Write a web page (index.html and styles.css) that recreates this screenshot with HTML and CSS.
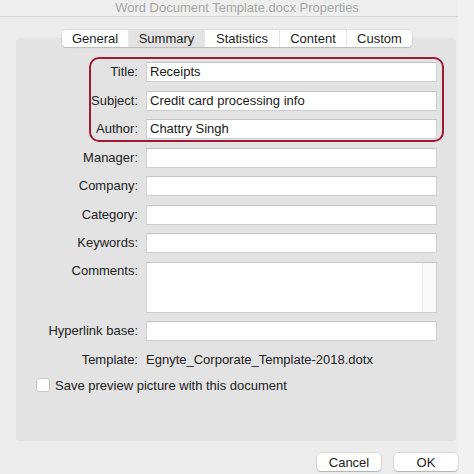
FILE: index.html
```html
<!DOCTYPE html>
<html lang="en">
<head>
    <meta charset="UTF-8">
    <meta name="viewport" content="width=device-width, initial-scale=1.0">
    <title>Word Document Template.docx Properties</title>
    <link rel="stylesheet" href="styles.css">
</head>
<body>
    <div class="window">
        <div class="titlebar">Word Document Template.docx Properties</div>

        <div class="tabs">
            <div class="tab">General</div>
            <div class="tab selected">Summary</div>
            <div class="tab">Statistics</div>
            <div class="tab">Content</div>
            <div class="tab">Custom</div>
        </div>

        <div class="panel">
            <div class="group">
                <div class="mark"></div>
                <div class="form">
                    <label>Title:</label>
                    <div class="field">Receipts</div>
                    <label>Subject:</label>
                    <div class="field">Credit card processing info</div>
                    <label>Author:</label>
                    <div class="field">Chattry Singh</div>
                </div>
            </div>

            <div class="form">
                <label>Manager:</label>
                <div class="field"></div>
                <label>Company:</label>
                <div class="field"></div>
                <label>Category:</label>
                <div class="field"></div>
                <label>Keywords:</label>
                <div class="field"></div>
                <label class="top">Comments:</label>
                <div class="field comments"><div class="scroll"></div></div>
                <label>Hyperlink base:</label>
                <div class="field"></div>
                <label>Template:</label>
                <div class="value">Egnyte_Corporate_Template-2018.dotx</div>
            </div>

            <div class="check">
                <span class="box"></span>
                <span>Save preview picture with this document</span>
            </div>
        </div>

        <div class="actions">
            <button>Cancel</button>
            <button>OK</button>
        </div>
    </div>
</body>
</html>
```

FILE: styles.css
```css
body {
    margin: 0;
    background-color: #f1f1f1;
    font-family: "Liberation Sans", Arial, sans-serif;
    font-size: 13px;
    color: #222;
}
.window {
    width: 458px;
    height: 474px;
    background-color: #ececec;
}
.titlebar {
    height: 17px;
    line-height: 15px;
    text-align: center;
    color: #a6a6a6;
    background-color: #eeeeee;
    border-bottom: 1px solid #d9d9d9;
    box-sizing: border-box;
    padding-left: 16px;
}
.tabs {
    display: flex;
    width: 350px;
    height: 17px;
    margin: 13px 0 -9px 62px;
    background-color: #fff;
    border-radius: 4px;
    box-shadow: 0 0 0 0.5px rgba(0,0,0,0.12), 0 1px 1px rgba(0,0,0,0.12);
    position: relative;
    overflow: hidden;
}
.tab {
    line-height: 17px;
    text-align: center;
    border-left: 1px solid #e6e6e6;
    color: #1e1e1e;
}
.tab:first-child { border-left: none; width: 66px; }
.tab:nth-child(2) { width: 75px; }
.tab:nth-child(3) { width: 74px; }
.tab:nth-child(4) { width: 66px; }
.tab:nth-child(5) { flex: 1; }
.tab.selected {
    background-color: #e3e3e3;
}
.panel {
    margin-left: 16px;
    width: 440px;
    height: 403px;
    box-sizing: border-box;
    padding-top: 24px;
    background-color: #e3e3e3;
    border-radius: 4px;
}
.group {
    position: relative;
    margin-bottom: 8.5px;
}
.mark {
    position: absolute;
    left: 73px;
    top: -5px;
    width: 355px;
    height: 85px;
    box-sizing: border-box;
    border: 2px solid #9c1c38;
    border-radius: 10px;
}
.form {
    display: grid;
    grid-template-columns: 122px 291px;
    column-gap: 8px;
    row-gap: 8.5px;
}
.form label {
    text-align: right;
    line-height: 20px;
}
.form label.top {
    line-height: 18px;
}
.field {
    height: 20px;
    box-sizing: border-box;
    background-color: #fff;
    border: 1px solid #cfcfcf;
    border-top-color: #c4c4c4;
    padding-left: 3px;
    line-height: 18px;
    color: #1a1a1a;
}
.field.comments {
    height: 51px;
    position: relative;
}
.scroll {
    position: absolute;
    right: 0;
    top: 0;
    bottom: 0;
    width: 13px;
    border-left: 1px solid #ececec;
    background-color: #fafafa;
}
.value {
    line-height: 20px;
}
.check {
    display: flex;
    align-items: center;
    gap: 5px;
    margin: 8px 0 0 20px;
}
.check .box {
    width: 12px;
    height: 12px;
    background-color: #fff;
    border: 1px solid #c6c6c6;
    border-radius: 3px;
}
.actions {
    display: flex;
    justify-content: flex-end;
    gap: 13px;
    margin-top: 12px;
}
.actions button {
    width: 64px;
    height: 18px;
    padding: 0;
    font-family: inherit;
    font-size: 13px;
    color: #222;
    background-color: #fff;
    border: none;
    border-radius: 4px;
    box-shadow: 0 0 0 0.5px rgba(0,0,0,0.15), 0 1px 1px rgba(0,0,0,0.18);
}
```
